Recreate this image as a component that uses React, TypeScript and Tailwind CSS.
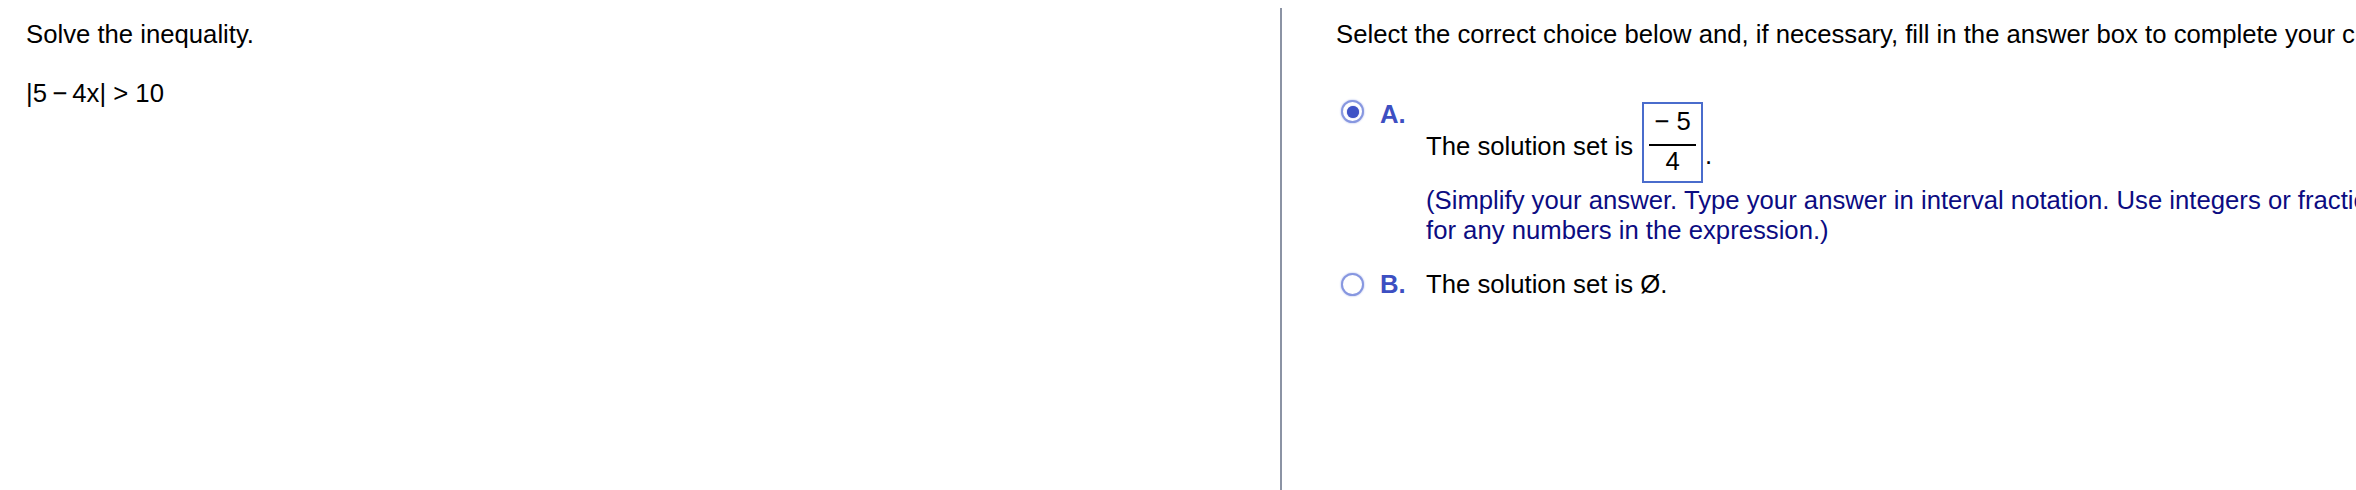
import React from "react";

function Radio({ checked }: { checked?: boolean }) {
  return (
    <div className="flex h-[23px] w-[23px] shrink-0 items-center justify-center rounded-full border-[2.5px] border-[#8797e0] bg-white shadow-[0_0_2px_#9aa8e6]">
      {checked ? <div className="h-[12px] w-[12px] rounded-full bg-[#3f53c6] shadow-[0_0_1px_#3f53c6]" /> : null}
    </div>
  );
}

export default function App() {
  return (
    <div className="flex h-[490px] w-[2356px] overflow-hidden bg-white font-['Liberation_Sans',Arial,Helvetica,sans-serif] text-[25.7px] leading-[30px] text-black">
      {/* Left: question */}
      <div className="w-[1280px] shrink-0 pl-[26px] pt-[19px]">
        <div className="whitespace-nowrap">Solve the inequality.</div>
        <div className="mt-[29px] whitespace-nowrap">|5{"\u2009"}−{"\u2009"}4x| &gt; 10</div>
      </div>

      {/* Divider */}
      <div className="mt-[8px] w-[2px] shrink-0 self-stretch bg-[#8b93a4]" />

      {/* Right: answer */}
      <div className="min-w-0 flex-1 overflow-hidden pl-[54px] pt-[19px]">
        <div className="whitespace-nowrap">
          Select the correct choice below and, if necessary, fill in the answer box to complete your choice.
        </div>

        {/* Option A */}
        <div className="mt-[50px] flex items-start">
          <div className="ml-[5px] mt-[1px]">
            <Radio checked />
          </div>
          <div className="ml-[16px] w-[46px] shrink-0 font-bold text-[#3d4fc2]">A.</div>
          <div className="mt-[3px] flex flex-col">
            <div className="flex items-center">
              <span className="whitespace-nowrap pt-[7px]">The solution set is</span>
              <div className="ml-[9px] flex h-[81px] w-[61px] flex-col items-stretch border-2 border-[#4a6ccc] px-[5px] text-center">
                <div className="mt-[2px] whitespace-nowrap">−&nbsp;5</div>
                <div className="mt-[8px] h-[2px] bg-black" />
                <div>4</div>
              </div>
              <span className="ml-[2px] pt-[24px]">.</span>
            </div>
            <div className="mt-[2px] whitespace-nowrap text-[#0c0c82]">
              (Simplify your answer. Type your answer in interval notation. Use integers or fractions
            </div>
            <div className="whitespace-nowrap text-[#0c0c82]">for any numbers in the expression.)</div>
          </div>
        </div>

        {/* Option B */}
        <div className="mt-[24px] flex items-center">
          <div className="ml-[5px]">
            <Radio />
          </div>
          <div className="ml-[16px] w-[46px] shrink-0 font-bold text-[#3d4fc2]">B.</div>
          <div className="whitespace-nowrap">The solution set is Ø.</div>
        </div>
      </div>
    </div>
  );
}
